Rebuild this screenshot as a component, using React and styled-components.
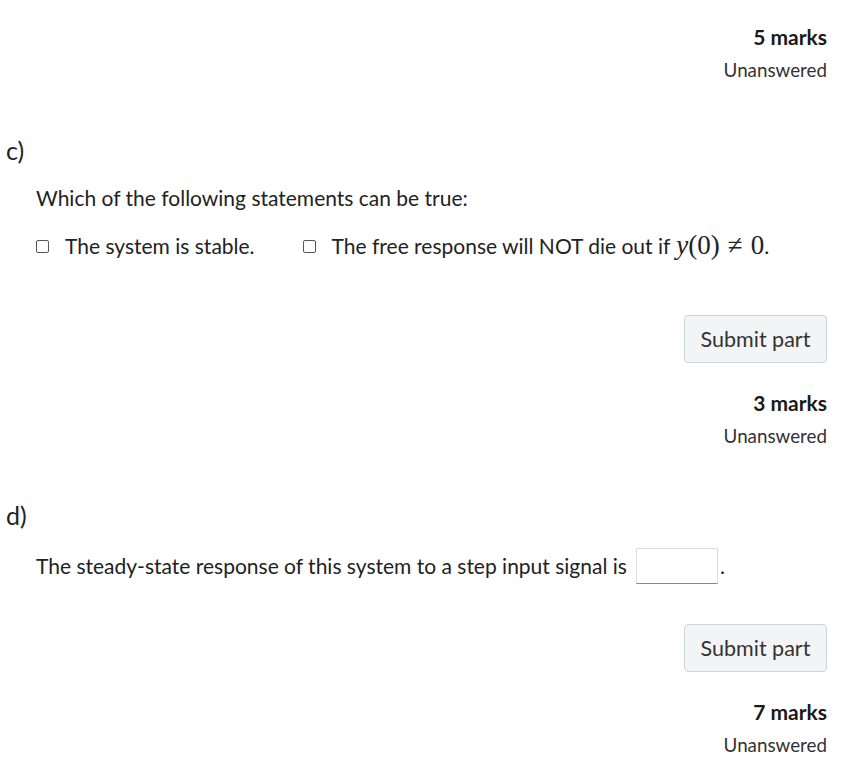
import React from 'react'
import styled, { createGlobalStyle } from 'styled-components'

const GlobalStyle = createGlobalStyle`
  body {
    margin: 0;
    background: #ffffff;
    font-family: Lato, "Open Sans", sans-serif;
    color: #222;
  }
`

const Page = styled.div`
  width: 842px;
  padding: 0 15px 0 6px;
  box-sizing: border-box;
`

const MarksBlock = styled.div`
  display: flex;
  flex-direction: column;
  align-items: flex-end;
  padding-top: ${p => p.$top || 0}px;
`

const Marks = styled.div`
  font-size: 21px;
  font-weight: 700;
  line-height: 30px;
  color: #1a1a1a;
`

const Status = styled.div`
  font-size: 18.8px;
  line-height: 24px;
  margin-top: 6px;
  color: #333;
`

const PartLabel = styled.div`
  font-size: 25px;
  line-height: 32px;
  margin-top: ${p => p.$top}px;
  color: #222;
`

const Prompt = styled.p`
  margin: ${p => p.$top}px 0 0 30px;
  font-size: 21px;
  line-height: 30px;
  color: #222;
`

const Choices = styled.div`
  display: flex;
  gap: 48px;
  height: 30px;
  margin: 18px 0 0 30px;
`

const Choice = styled.label`
  display: flex;
  align-items: center;
  gap: 16px;
  font-size: 21px;
  line-height: 30px;
  color: #222;
`

const Box = styled.span`
  width: 11px;
  height: 11px;
  border: 1px solid #555;
  border-radius: 2px;
  background: #fff;
  flex-shrink: 0;
`

const Math = styled.span`
  font-family: "Liberation Serif", "DejaVu Serif", serif;
  font-size: 27px;
  line-height: 1;
  margin-left: 6px;
`

const Var = styled.i`
  font-style: italic;
`

const Rel = styled.span`
  margin: 0 8px;
`

const Blank = styled.span`
  display: inline-block;
  width: 80px;
  height: 34px;
  border: 1px solid #ddd;
  border-bottom-color: #888;
  vertical-align: middle;
  position: relative;
  top: -3px;
  margin: 0 2px 0 9px;
`

const SubmitRow = styled.div`
  display: flex;
  justify-content: flex-end;
  margin-top: ${p => p.$top}px;
`

const SubmitButton = styled.button`
  height: 48px;
  width: 143px;
  padding: 0;
  font-family: inherit;
  font-size: 21.5px;
  color: #333;
  background: #f3f4f5;
  border: 1px solid #c9d6dd;
  border-radius: 4px;
`

const MarksAfter = styled(MarksBlock)`
  margin-top: 25px;
`

const App = () => (
  <Page>
    <GlobalStyle />
    <MarksBlock $top={22}>
      <Marks>5 marks</Marks>
      <Status>Unanswered</Status>
    </MarksBlock>

    <PartLabel $top={52}>c)</PartLabel>
    <Prompt $top={17}>Which of the following statements can be true:</Prompt>
    <Choices>
      <Choice><Box />The system is stable.</Choice>
      <Choice>
        <Box />
        <span>
          The free response will NOT die out if
          <Math><Var>y</Var>(0)<Rel>≠</Rel>0</Math>.
        </span>
      </Choice>
    </Choices>
    <SubmitRow $top={54}>
      <SubmitButton>Submit part</SubmitButton>
    </SubmitRow>
    <MarksAfter>
      <Marks>3 marks</Marks>
      <Status>Unanswered</Status>
    </MarksAfter>

    <PartLabel $top={51}>d)</PartLabel>
    <Prompt $top={20}>
      The steady-state response of this system to a step input signal is
      <Blank />.
    </Prompt>
    <SubmitRow $top={37}>
      <SubmitButton>Submit part</SubmitButton>
    </SubmitRow>
    <MarksAfter>
      <Marks>7 marks</Marks>
      <Status>Unanswered</Status>
    </MarksAfter>
  </Page>
)

export default App
